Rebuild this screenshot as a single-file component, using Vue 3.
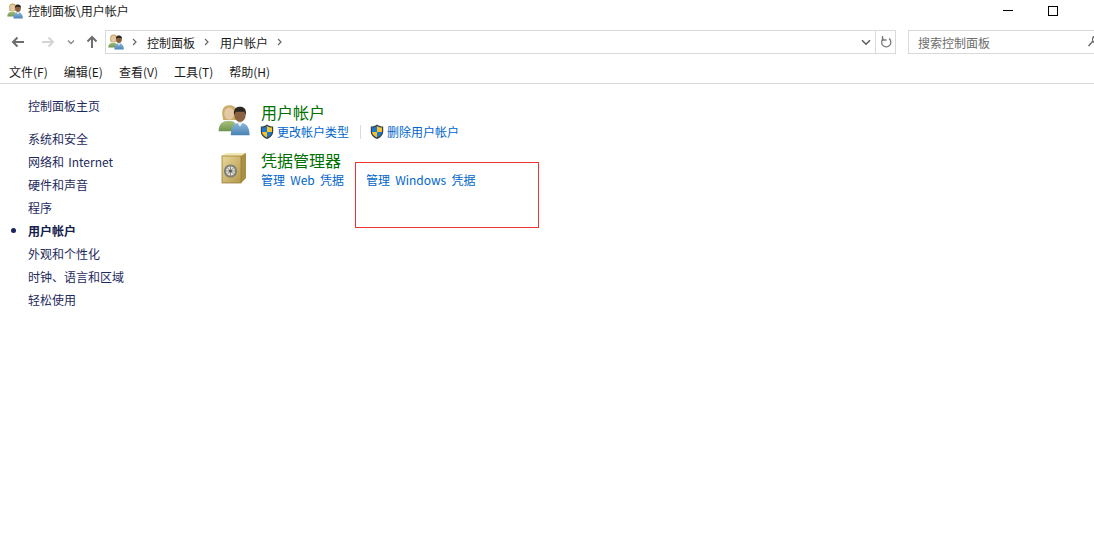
<script setup>
const nav = [
  { label: '控制面板主页', gap: true },
  { label: '系统和安全' },
  { label: '网络和 Internet' },
  { label: '硬件和声音' },
  { label: '程序' },
  { label: '用户帐户', active: true },
  { label: '外观和个性化' },
  { label: '时钟、语言和区域' },
  { label: '轻松使用' },
]
const menus = ['文件(F)', '编辑(E)', '查看(V)', '工具(T)', '帮助(H)']
</script>

<template>
  <div class="win">
    <svg width="0" height="0" class="defs">
      <defs>
        <linearGradient id="shirtG" x1="0" y1="0" x2="0" y2="1"><stop offset="0" stop-color="#a9c27c" /><stop offset="1" stop-color="#6f9350" /></linearGradient>
        <linearGradient id="shirtB" x1="0" y1="0" x2="0" y2="1"><stop offset="0" stop-color="#8db9dc" /><stop offset="1" stop-color="#4a83b5" /></linearGradient>
        <linearGradient id="safeFront" x1="0" y1="0" x2="1" y2="1"><stop offset="0" stop-color="#e9d798" /><stop offset="1" stop-color="#b4974c" /></linearGradient>
        <g id="users">
          <path d="M2.2 6C1.6 1.4 3.8 0.6 5.8 0.6S9.8 1.6 9.2 6L9 8H2.6Z" fill="#c9ae6e" />
          <ellipse cx="5.6" cy="4.8" rx="2.5" ry="3.1" fill="#e6c9a4" />
          <path d="M0.3 13.6C0.3 9.8 2.6 8.4 5.4 8.4S9.5 9.8 9.5 13.6Z" fill="url(#shirtG)" />
          <ellipse cx="11" cy="5.6" rx="2.8" ry="3.4" fill="#8a6242" />
          <path d="M8 5.6C7.6 1.8 9.6 1.4 11 1.4S14.4 2 14 5.6L13.2 3.9H8.9Z" fill="#2b2622" />
          <path d="M6.4 15.6C6.4 10.8 8.6 9.2 11 9.2S15.8 10.8 15.8 15.6Z" fill="url(#shirtB)" />
          <path d="M9.6 9.4 11 11.4 12.4 9.4Z" fill="#e7eef5" />
        </g>
        <g id="shield">
          <path d="M7 0.5C5 2 3 2.6 0.8 2.6V7.5C0.8 11 3.5 13.5 7 15C10.5 13.5 13.2 11 13.2 7.5V2.6C11 2.6 9 2 7 0.5Z" fill="#37424d" />
          <path d="M7 2V8H2V3.6C3.8 3.5 5.5 3 7 2Z" fill="#1f77c9" />
          <path d="M7 2C8.5 3 10.2 3.5 12 3.6V8H7Z" fill="#f4c430" />
          <path d="M2 8H7V13.6C4.5 12.4 2.2 10.6 2 8Z" fill="#f4c430" />
          <path d="M7 8H12C11.8 10.6 9.5 12.4 7 13.6Z" fill="#1f77c9" />
        </g>
      </defs>
    </svg>

    <header class="title">
      <svg class="ico16" viewBox="0 0 16 16"><use href="#users" /></svg>
      <span class="title-text">控制面板\用户帐户</span>
      <div class="caption">
        <span class="cap-min"></span>
        <span class="cap-max"></span>
      </div>
    </header>

    <div class="toolbar">
      <div class="arrows">
        <svg class="back" width="14" height="12" viewBox="0 0 14 12"><path d="M13 6H2M6.5 1.5 2 6l4.5 4.5" fill="none" stroke="#6d6d6d" stroke-width="2" /></svg>
        <svg class="fwd" width="14" height="12" viewBox="0 0 14 12"><path d="M1 6h11M7.5 1.5 12 6l-4.5 4.5" fill="none" stroke="#d4d4d4" stroke-width="2" /></svg>
        <svg class="drop" width="8" height="6" viewBox="0 0 8 6"><path d="M1 1.5 4 4.5 7 1.5" fill="none" stroke="#8a8a8a" stroke-width="1.4" /></svg>
        <svg class="up" width="12" height="14" viewBox="0 0 12 14"><path d="M6 13V2M1.5 6.5 6 2l4.5 4.5" fill="none" stroke="#6d6d6d" stroke-width="2" /></svg>
      </div>
      <div class="address">
        <svg class="ico16" viewBox="0 0 16 16"><use href="#users" /></svg>
        <svg class="crumb-arrow first" width="5" height="8" viewBox="0 0 5 8"><path d="M1 1 4 4 1 7" fill="none" stroke="#666" stroke-width="1.2" /></svg>
        <span class="crumb">控制面板</span>
        <svg class="crumb-arrow" width="5" height="8" viewBox="0 0 5 8"><path d="M1 1 4 4 1 7" fill="none" stroke="#666" stroke-width="1.2" /></svg>
        <span class="crumb">用户帐户</span>
        <svg class="crumb-arrow" width="5" height="8" viewBox="0 0 5 8"><path d="M1 1 4 4 1 7" fill="none" stroke="#666" stroke-width="1.2" /></svg>
        <div class="addr-end">
          <svg class="addr-chev" width="10" height="7" viewBox="0 0 10 7"><path d="M1 1.2 5 5.2 9 1.2" fill="none" stroke="#5f5f5f" stroke-width="1.6" /></svg>
          <div class="refresh">
            <svg width="12" height="14" viewBox="0 0 12 14"><path d="M3.5 3.6A4.6 4.6 0 1 0 9 3.6" fill="none" stroke="#777" stroke-width="1.3" /><path d="M2.5 1V5H6.5" fill="none" stroke="#777" stroke-width="1.3" /></svg>
          </div>
        </div>
      </div>
      <div class="search">
        <span class="search-text">搜索控制面板</span>
        <svg class="search-ico" width="8" height="12" viewBox="0 0 8 12"><path d="M0.5 10 5 5" fill="none" stroke="#666" stroke-width="1.4" /><circle cx="8" cy="3.5" r="3.5" fill="none" stroke="#666" stroke-width="1.2" /></svg>
      </div>
    </div>

    <nav class="menubar">
      <span v-for="m in menus" :key="m" class="menu">{{ m }}</span>
    </nav>

    <main class="body">
      <aside class="side">
        <div v-for="n in nav" :key="n.label" class="side-item" :class="{ gap: n.gap, active: n.active }">
          <span v-if="n.active" class="dot"></span>
          {{ n.label }}
        </div>
      </aside>

      <section class="content">
        <div class="cat">
          <svg class="cat-ico" viewBox="0 0 16 16"><use href="#users" /></svg>
          <div>
            <h2 class="cat-title">用户帐户</h2>
            <div class="links">
              <svg class="shield" viewBox="0 0 14 16"><use href="#shield" /></svg>
              <a class="link">更改帐户类型</a>
              <span class="sep"></span>
              <svg class="shield" viewBox="0 0 14 16"><use href="#shield" /></svg>
              <a class="link">删除用户帐户</a>
            </div>
          </div>
        </div>
        <div class="cat second">
          <svg class="cat-ico safe" viewBox="0 0 32 32">
            <path d="M4 4 9 1H28V26L23 31H4Z" fill="#d9c27a" />
            <path d="M4 4 8 1H28L23 4Z" fill="#f3e7b4" />
            <path d="M23 4 28 1V26L23 31Z" fill="#a98e45" />
            <rect x="4" y="4" width="19" height="27" fill="url(#safeFront)" stroke="#9a8138" stroke-width="0.8" />
            <circle cx="12.5" cy="19" r="6.6" fill="#7f7f78" />
            <circle cx="12.5" cy="19" r="4.6" fill="#e3e3dc" />
            <path d="M12.5 14.5V23.5M8 19H17M9.3 15.8 15.7 22.2M15.7 15.8 9.3 22.2" stroke="#8b8b84" stroke-width="1" />
            <circle cx="12.5" cy="19" r="1.6" fill="#5f5f5a" />
          </svg>
          <div>
            <h2 class="cat-title">凭据管理器</h2>
            <div class="links cred">
              <a class="link">管理 Web 凭据</a>
              <a class="link win-link">管理 Windows 凭据</a>
            </div>
          </div>
          <div class="mark"></div>
        </div>
      </section>
    </main>
  </div>
</template>

<style>
html, body { margin: 0; background: #fff; overflow: hidden; }
</style>

<style scoped>
.win {
  width: 1094px;
  height: 555px;
  overflow: hidden;
  background: #fff;
  font-family: "Noto Sans CJK SC", "Noto Sans", sans-serif;
  font-size: 12px;
  color: #1a1a1a;
}
.defs { position: absolute; }
.ico16 { width: 16px; height: 16px; flex: none; }

.title {
  height: 22px;
  display: flex;
  align-items: center;
  padding-left: 7px;
}
.title-text { margin-left: 5px; line-height: 20px; }
.caption {
  margin-left: auto;
  margin-right: 36px;
  margin-top: -1px;
  display: flex;
  align-items: center;
}
.cap-min { width: 10px; height: 1px; background: #000; }
.cap-max { width: 8px; height: 8px; border: 1px solid #000; margin-left: 35px; }

.toolbar {
  height: 24px;
  margin-top: 8px;
  display: flex;
  align-items: center;
}
.arrows { width: 105px; display: flex; align-items: center; flex: none; }
.back { margin-left: 11px; }
.fwd { margin-left: 16px; }
.drop { margin-left: 12px; }
.up { margin-left: 11px; }
.address {
  width: 791px;
  height: 24px;
  box-sizing: border-box;
  border: 1px solid #d9d9d9;
  display: flex;
  align-items: center;
  padding-left: 2px;
  flex: none;
}
.crumb { color: #1a1a1a; margin-left: 10px; }
.crumb-arrow { margin-left: 8px; flex: none; }
.crumb + .crumb-arrow { margin-left: 9px; margin-right: 1px; }
.addr-end { margin-left: auto; display: flex; align-items: center; height: 100%; }
.addr-chev { margin-right: 4px; }
.refresh {
  width: 19px;
  height: 100%;
  border-left: 1px solid #d9d9d9;
  display: flex;
  align-items: center;
  justify-content: center;
}
.search {
  margin-left: 12px;
  flex: 1;
  height: 24px;
  box-sizing: border-box;
  border: 1px solid #d9d9d9;
  border-right: 0;
  display: flex;
  align-items: center;
  padding-left: 9px;
  color: #6d6d6d;
}
.search-ico { margin-left: auto; margin-right: -2px; }

.menubar {
  height: 30px;
  box-sizing: border-box;
  border-bottom: 1px solid #d9d9d9;
  display: flex;
  align-items: center;
  padding: 5px 0 0 9px;
  gap: 16px;
  color: #1a1a1a;
}

.body { display: flex; }
.side { width: 218px; flex: none; padding: 10px 0 0 28px; box-sizing: border-box; word-spacing: 1.5px; }
.side-item { height: 23px; line-height: 23px; color: #1e2a5c; position: relative; white-space: nowrap; }
.side-item.gap { margin-bottom: 10px; }
.side-item.active { font-weight: 700; color: #14204a; }
.dot {
  position: absolute;
  left: -17px;
  top: 9px;
  width: 5px;
  height: 5px;
  border-radius: 50%;
  background: #1a2560;
}

.content { padding-top: 17px; }
.cat { display: flex; position: relative; }
.second { margin-top: 9px; }
.cat-ico { width: 32px; height: 32px; margin: 3px 11px 0 0; flex: none; }
.safe { margin-top: 3px; }
.cat-title {
  margin: 0;
  font-size: 16px;
  font-weight: 400;
  line-height: 22px;
  color: #007000;
}
.links { display: flex; align-items: center; height: 17px; color: #0066cc; white-space: nowrap; }
.cred { word-spacing: 2.5px; }
.link { color: #0066cc; }
.shield { width: 14px; height: 16px; margin: 0 3px 0 -1px; flex: none; }
.sep { width: 1px; height: 14px; background: #d9d9d9; margin: 0 10px 0 11px; }
.win-link { margin-left: 22px; }
.mark {
  position: absolute;
  left: 137px;
  top: 13px;
  width: 184px;
  height: 66px;
  box-sizing: border-box;
  border: 1px solid #ee3333;
}
</style>
